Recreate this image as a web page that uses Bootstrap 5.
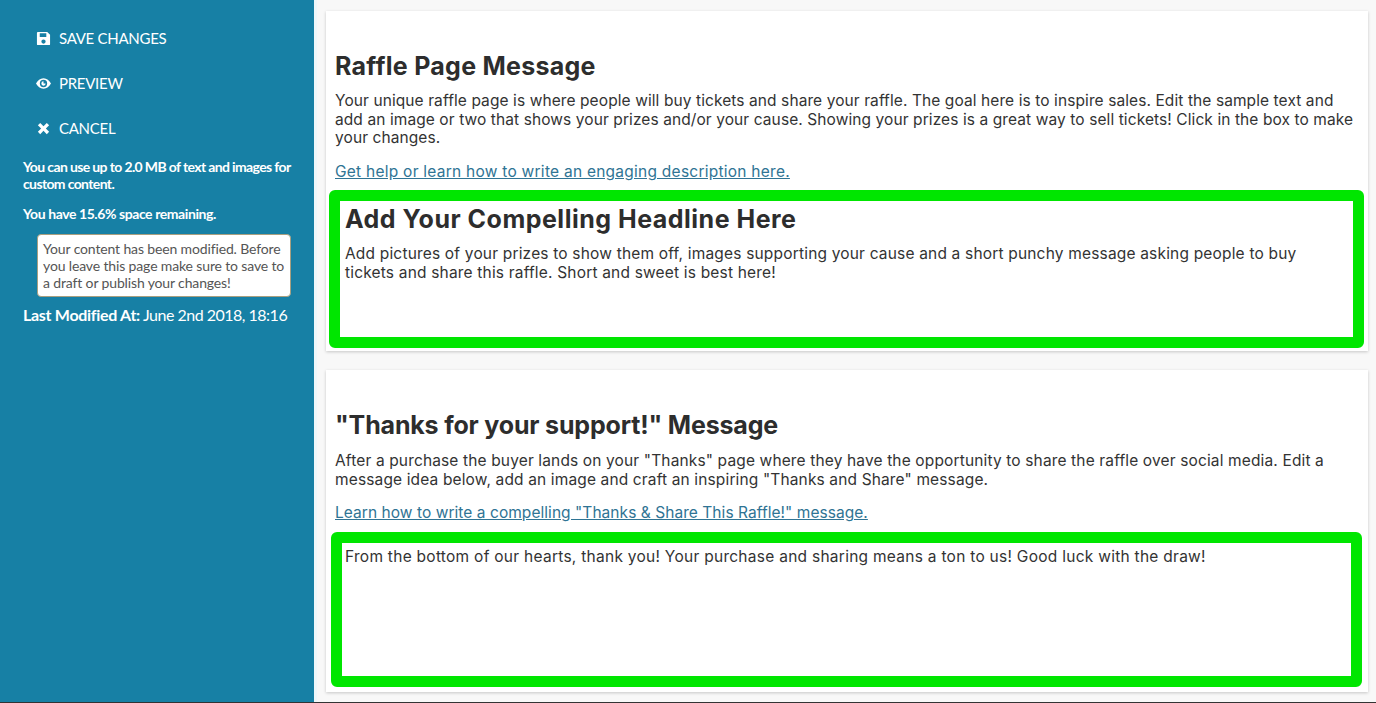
<!DOCTYPE html>
<html lang="en">
<head>
<meta charset="utf-8">
<title>Raffle content</title>
<link rel="stylesheet" href="https://cdn.jsdelivr.net/npm/bootstrap@5.3.0/dist/css/bootstrap.min.css">
<style>
html,body{height:703px;overflow:hidden}
body{background:#f8f8f8;font-family:"Lato","Liberation Sans",sans-serif;color:#333}
.shell{height:702px}
.endline{height:1px;background:#333}
.side{width:314px;flex:none;background:#1780a5;color:#fff;padding:16px 22px 0 23px}
.side-action{display:flex;align-items:center;height:45px;padding-left:13px;gap:8px;color:#fff;font-size:15px;letter-spacing:-.28px;text-decoration:none;text-transform:uppercase}
.side-action svg{width:15px;height:15px;fill:#fff;flex:none}
.side-note{font-size:14px;line-height:17px;font-weight:700;letter-spacing:-.42px;margin:0 0 13px}
.side-first{margin-top:7px;letter-spacing:-.63px}
.mod-box{background:#fff;border:1px solid #a89f80;border-radius:4px;color:#555;font-size:14px;line-height:17px;letter-spacing:-.14px;padding:5px 2px 5px 5px;margin:-1px 0 8px 14px;width:254px}
.side-last{font-size:16px;line-height:20px;letter-spacing:-.5px;white-space:nowrap}
.side-last b{letter-spacing:-.3px}
.main{flex:1;padding:11px 8px 0 9px;border-left:3px solid #eef7fa;min-width:0}
.panel{background:#fff;box-shadow:0 1px 3px rgba(0,0,0,.2);padding:0 9px;font-family:"Inter","Noto Sans","Liberation Sans",sans-serif;font-size:15.5px;line-height:18.5px;color:#333;letter-spacing:.25px}
.panel-a{height:340px;margin-bottom:19px;padding-top:40px}
.panel-b{height:322px;padding-top:40px}
.ttl{font-size:25px;font-weight:700;line-height:30px;margin:0 0 11px;color:#2d2d2d;letter-spacing:.27px}
.panel-b .ttl{letter-spacing:-.17px;margin-bottom:12px}
.panel p{margin:0}
.panel-a>p{letter-spacing:.09px}
.panel-b>p{letter-spacing:.14px}
.panel-a .editbox p{letter-spacing:.18px}
.panel-b .editbox p{letter-spacing:.27px}
.lnk{color:#2f7494;text-decoration:underline;display:block}
.panel-a .lnk{margin-top:15px;margin-bottom:9px}
.panel-b .lnk{margin-top:15px;margin-bottom:9px;letter-spacing:.05px}
.editbox{border:11px solid #00e600;border-radius:6px;background:#fff}
.panel-a .editbox{height:158px;margin:0 -5px 0 -6px;padding:3px 4px 0 5px}
.panel-b .editbox{height:155px;margin:0 -3px 0 -4px;padding:5px 4px 0 3px}
.edit-h{font-size:25px;font-weight:700;line-height:30px;margin:0 0 11px;color:#2d2d2d;letter-spacing:.5px}
</style>
</head>
<body>
<div class="shell d-flex">
  <aside class="side">
    <a class="side-action" href="#"><svg viewBox="0 0 16 16"><path d="M2 1h10l3 3v10a1 1 0 0 1-1 1H2a1 1 0 0 1-1-1V2a1 1 0 0 1 1-1zm2 1.500v4h7v-4zM8 9a2.300 2.300 0 1 0 0 4.600A2.300 2.300 0 0 0 8 9z" fill-rule="evenodd"/></svg>Save Changes</a>
    <a class="side-action" href="#"><svg viewBox="0 0 16 16"><path d="M8 2.500C4.500 2.500 1.700 5 0 8c1.700 3 4.500 5.500 8 5.500s6.300-2.500 8-5.500c-1.700-3-4.500-5.500-8-5.500zm0 1.600a3.900 3.900 0 1 1 0 7.800 3.900 3.900 0 0 1 0-7.800zM8 5.700a2.300 2.300 0 1 0 2.300 2.300H8z" fill-rule="evenodd"/></svg>Preview</a>
    <a class="side-action" href="#"><svg viewBox="0 0 16 16"><path d="M4.500 2 8 5.500 11.500 2 14 4.500 10.500 8l3.500 3.500-2.500 2.500L8 10.500 4.500 14 2 11.500 5.500 8 2 4.500z"/></svg>Cancel</a>
    <p class="side-note side-first">You can use up to 2.0 MB of text and images for custom content.</p>
    <p class="side-note">You have 15.6% space remaining.</p>
    <div class="mod-box">Your content has been modified. Before you leave this page make sure to save to a draft or publish your changes!</div>
    <div class="side-last"><b>Last Modified At:</b> June 2nd 2018, 18:16</div>
  </aside>
  <main class="main">
    <section class="panel panel-a">
      <h2 class="ttl">Raffle Page Message</h2>
      <p>Your unique raffle page is where people will buy tickets and share your raffle. The goal here is to inspire sales. Edit the sample text and add an image or two that shows your prizes and/or your cause. Showing your prizes is a great way to sell tickets! Click in the box to make your changes.</p>
      <a class="lnk" href="#">Get help or learn how to write an engaging description here.</a>
      <div class="editbox">
        <h2 class="edit-h">Add Your Compelling Headline Here</h2>
        <p>Add pictures of your prizes to show them off, images supporting your cause and a short punchy message asking people to buy tickets and share this raffle. Short and sweet is best here!</p>
      </div>
    </section>
    <section class="panel panel-b">
      <h2 class="ttl">"Thanks for your support!" Message</h2>
      <p>After a purchase the buyer lands on your "Thanks" page where they have the opportunity to share the raffle over social media. Edit a message idea below, add an image and craft an inspiring "Thanks and Share" message.</p>
      <a class="lnk" href="#">Learn how to write a compelling "Thanks &amp; Share This Raffle!" message.</a>
      <div class="editbox">
        <p>From the bottom of our hearts, thank you! Your purchase and sharing means a ton to us! Good luck with the draw!</p>
      </div>
    </section>
  </main>
</div>
<div class="endline"></div>
<script src="https://cdn.jsdelivr.net/npm/bootstrap@5.3.0/dist/js/bootstrap.bundle.min.js"></script>
</body>
</html>
